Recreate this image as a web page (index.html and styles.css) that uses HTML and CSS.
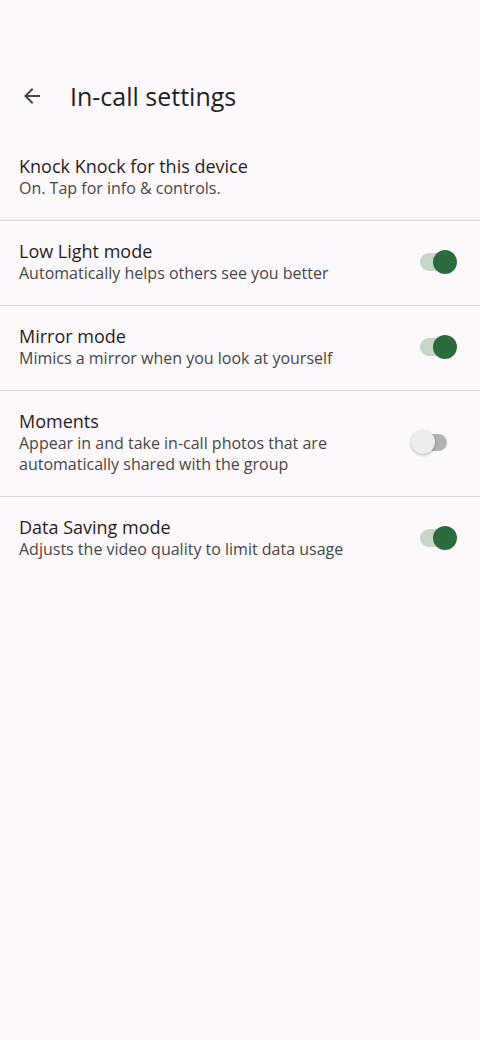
FILE: index.html
```html
<!DOCTYPE html>
<html>
<head>
  <title>In-call settings</title>
  <link rel="stylesheet" href="styles.css">
</head>
<body>
  <div class="app-bar">
    <button class="back-btn" aria-label="Back">
      <svg width="24" height="24" viewBox="0 0 24 24"><path d="M20 11H7.83l5.59-5.59L12 4l-8 8 8 8 1.41-1.41L7.83 13H20v-2z" fill="#44474e"/></svg>
    </button>
    <h1 class="app-title">In-call settings</h1>
  </div>

  <div class="settings-list">
    <div class="setting-row">
      <div class="setting-text">
        <div class="setting-title">Knock Knock for this device</div>
        <div class="setting-sub">On. Tap for info &amp; controls.</div>
      </div>
    </div>

    <div class="setting-row">
      <div class="setting-text">
        <div class="setting-title">Low Light mode</div>
        <div class="setting-sub">Automatically helps others see you better</div>
      </div>
      <div class="toggle on"><span class="thumb"></span></div>
    </div>

    <div class="setting-row">
      <div class="setting-text">
        <div class="setting-title">Mirror mode</div>
        <div class="setting-sub">Mimics a mirror when you look at yourself</div>
      </div>
      <div class="toggle on"><span class="thumb"></span></div>
    </div>

    <div class="setting-row">
      <div class="setting-text">
        <div class="setting-title">Moments</div>
        <div class="setting-sub">Appear in and take in-call photos that are automatically shared with the group</div>
      </div>
      <div class="toggle"><span class="thumb"></span></div>
    </div>

    <div class="setting-row last">
      <div class="setting-text">
        <div class="setting-title">Data Saving mode</div>
        <div class="setting-sub">Adjusts the video quality to limit data usage</div>
      </div>
      <div class="toggle on"><span class="thumb"></span></div>
    </div>
  </div>
</body>
</html>
```

FILE: styles.css
```css
body {
  margin: 0;
  font-family: "Open Sans", Roboto, sans-serif;
  background-color: #fdf8fc;
  color: #1f1f1f;
}
.app-bar {
  display: flex;
  align-items: center;
  height: 60px;
  margin-top: 66px;
  padding-left: 20px;
}
.back-btn {
  border: none;
  background: none;
  padding: 0;
  width: 24px;
  height: 24px;
  margin-right: 26px;
}
.back-btn svg {
  display: block;
}
.app-title {
  margin: 0;
  font-size: 25px;
  font-weight: 400;
  color: #1f1f1f;
}
.settings-list {
  margin-top: 10px;
}
.setting-row {
  display: flex;
  align-items: center;
  padding: 18px 26px 21px 19px;
  border-bottom: 1px solid #dcd9dc;
}
.setting-row.last {
  border-bottom: none;
}
.setting-text {
  flex: 1;
  min-width: 0;
  padding-right: 40px;
}
.setting-title {
  font-size: 18px;
  line-height: 24px;
  color: #1f1f1f;
}
.setting-sub {
  font-size: 16px;
  line-height: 21px;
  color: #444746;
}
.toggle {
  position: relative;
  width: 34px;
  height: 18px;
  border-radius: 9px;
  background-color: #c6d5c8;
  flex-shrink: 0;
}
.toggle .thumb {
  position: absolute;
  top: -3px;
  right: -3px;
  width: 24px;
  height: 24px;
  border-radius: 50%;
  background-color: #2b6b3c;
}
.toggle:not(.on) {
  width: 30px;
  height: 17px;
  margin-right: 7px;
  background-color: #b3b3b3;
}
.toggle:not(.on) .thumb {
  top: -4px;
  left: -6px;
  right: auto;
  background-color: #ececec;
  box-shadow: 0 1px 3px rgba(0, 0, 0, 0.3);
}
```
